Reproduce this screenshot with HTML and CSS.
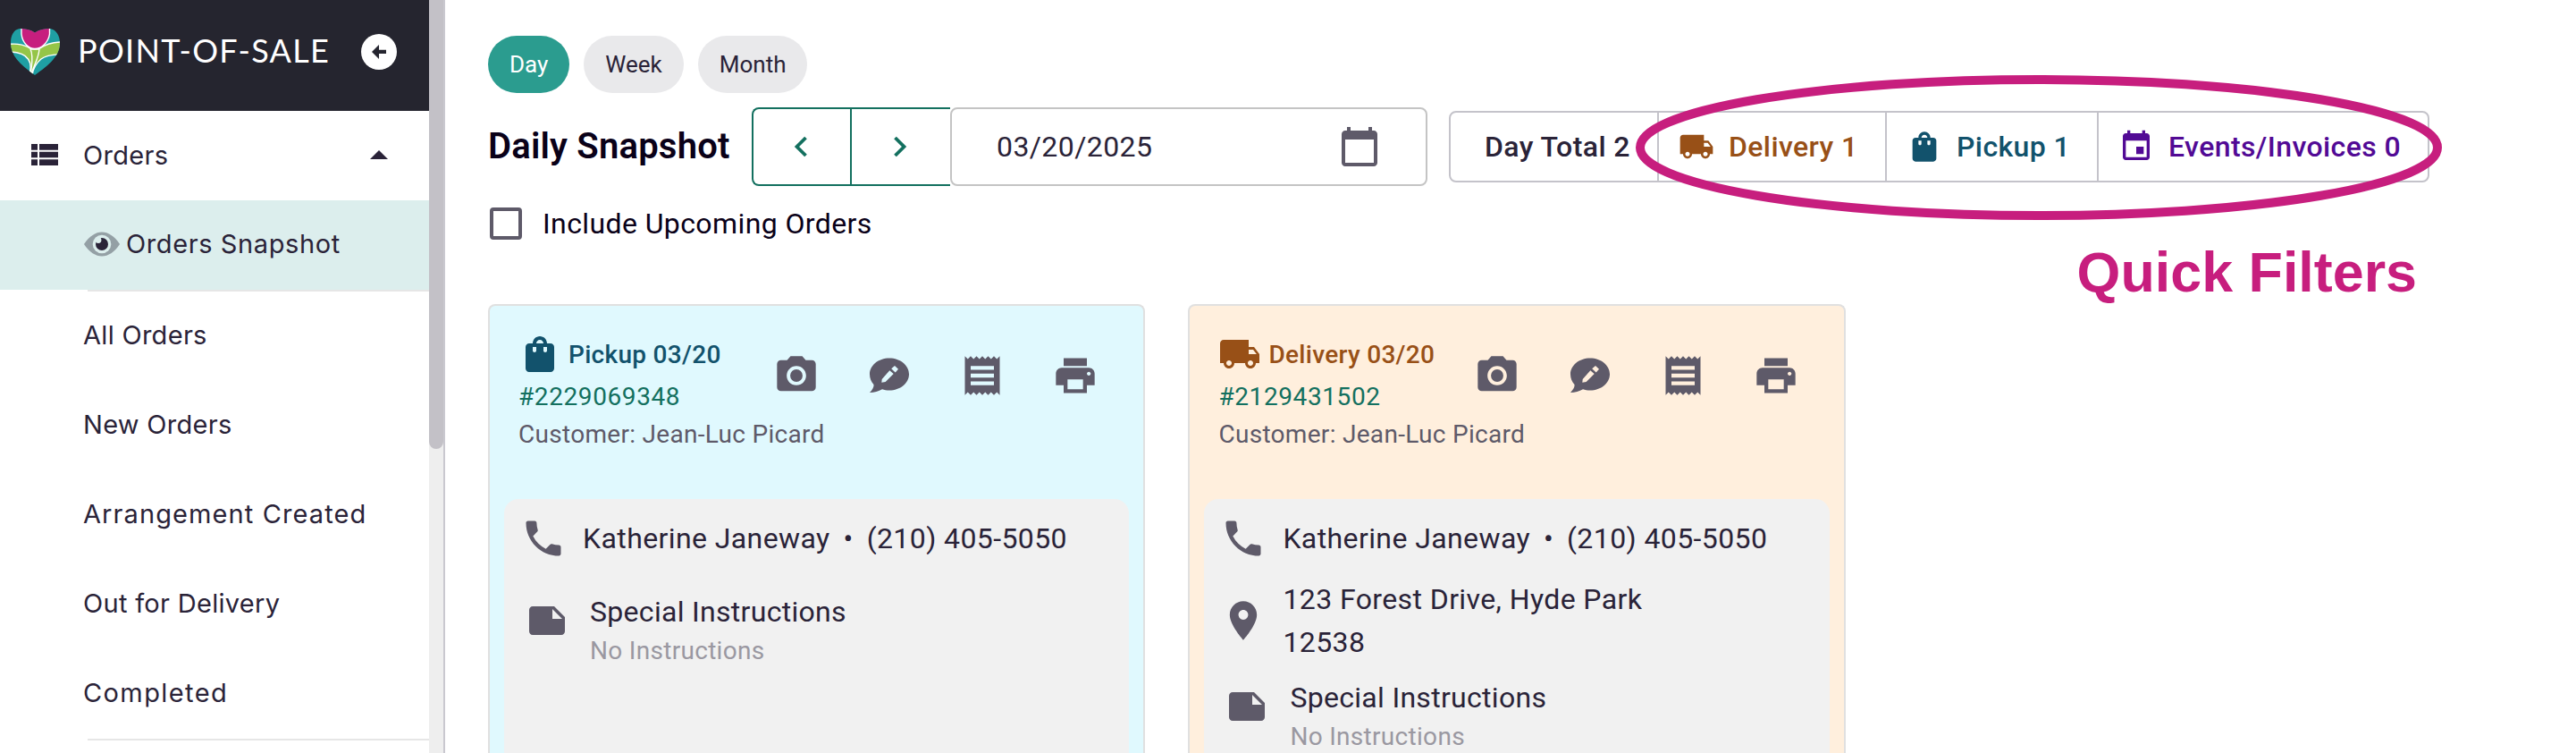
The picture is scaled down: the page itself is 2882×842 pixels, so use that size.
FILE: index.html
```
<!DOCTYPE html>
<html lang="en">
<head>
    <meta charset="UTF-8">
    <meta name="viewport" content="width=device-width, initial-scale=1.0">
    <title>Orders Snapshot</title>
    <link rel="stylesheet" href="styles.css">
</head>
<body>
    <!-- shared icons -->
    <svg class="sprite">
        <symbol id="bag" viewBox="0 0 24 24"><path d="M18 6h-2c0-2.21-1.79-4-4-4S8 3.79 8 6H6c-1.1 0-2 .9-2 2v12c0 1.1.9 2 2 2h12c1.1 0 2-.9 2-2V8c0-1.1-.9-2-2-2zm-8 4c0 .55-.45 1-1 1s-1-.45-1-1V8h2v2zm2-6c1.1 0 2 .9 2 2h-4c0-1.1.9-2 2-2zm4 6c0 .55-.45 1-1 1s-1-.45-1-1V8h2v2z"/></symbol>
        <symbol id="truck" viewBox="0 0 24 24"><path d="M20 8h-3V4H3c-1.1 0-2 .9-2 2v11h2c0 1.66 1.34 3 3 3s3-1.34 3-3h6c0 1.66 1.34 3 3 3s3-1.34 3-3h2v-5l-3-4zM6 18.5c-.83 0-1.5-.67-1.5-1.5s.67-1.5 1.5-1.5 1.5.67 1.5 1.5-.67 1.5-1.5 1.5zm13.5-9l1.96 2.5H17V9.5h2.5zm-1.5 9c-.83 0-1.5-.67-1.5-1.5s.67-1.5 1.5-1.5 1.5.67 1.5 1.5-.67 1.5-1.5 1.5z"/></symbol>
        <symbol id="event" viewBox="0 0 24 24"><path d="M17 12h-5v5h5v-5zM16 1v2H8V1H6v2H5c-1.11 0-1.99.9-1.99 2L3 19c0 1.1.89 2 2 2h14c1.1 0 2-.9 2-2V5c0-1.1-.9-2-2-2h-1V1h-2zm3 18H5V8h14v11z"/></symbol>
        <symbol id="calendar" viewBox="0 0 24 24"><path d="M20 3h-1V1h-2v2H7V1H5v2H4c-1.1 0-2 .9-2 2v16c0 1.1.9 2 2 2h16c1.1 0 2-.9 2-2V5c0-1.1-.9-2-2-2zm0 18H4V8h16v13z"/></symbol>
        <symbol id="camera" viewBox="0 0 24 24"><circle cx="12" cy="12" r="3.2"/><path d="M9 2L7.17 4H4c-1.1 0-2 .9-2 2v12c0 1.1.9 2 2 2h16c1.1 0 2-.9 2-2V6c0-1.1-.9-2-2-2h-3.17L15 2H9zm3 15c-2.76 0-5-2.24-5-5s2.24-5 5-5 5 2.24 5 5-2.24 5-5 5z"/></symbol>
        <symbol id="message" viewBox="0 0 52 52"><path fill-rule="evenodd" d="M26 6.5c12.2 0 22 8 22 18s-9.8 18-22 18c-3 0-5.6-.4-8-1.2C14 43.5 9 45 4 45c3-3 5-6.5 4.5-9C5.7 33 4 29 4 24.5c0-10 9.8-18 22-18zM17.3 33.7l4.4-.7 9-9-4.4-3.7-8.6 9.7zM28.2 18.3l4.5 4.2 3.3-3.7-4-3.900z"/></symbol>
        <symbol id="receipt" viewBox="0 0 24 24"><path d="M18 17H6v-2h12v2zm0-4H6v-2h12v2zm0-4H6V7h12v2zM3 22l1.5-1.5L6 22l1.5-1.5L9 22l1.5-1.5L12 22l1.5-1.5L15 22l1.5-1.5L18 22l1.5-1.5L21 22V2l-1.5 1.5L18 2l-1.5 1.5L15 2l-1.5 1.5L12 2l-1.5 1.5L9 2 7.5 3.5 6 2 4.5 3.5 3 2v20z"/></symbol>
        <symbol id="print" viewBox="0 0 24 24"><path d="M19 8H5c-1.66 0-3 1.34-3 3v6h4v4h12v-4h4v-6c0-1.66-1.34-3-3-3zm-3 11H8v-5h8v5zm3-7c-.55 0-1-.45-1-1s.45-1 1-1 1 .45 1 1-.45 1-1 1zm-1-9H6v4h12V3z"/></symbol>
        <symbol id="phone" viewBox="0 0 24 24"><path d="M6.62 10.79c1.44 2.83 3.76 5.14 6.59 6.59l2.2-2.2c.27-.27.67-.36 1.02-.24 1.12.37 2.33.57 3.57.57.55 0 1 .45 1 1V20c0 .55-.45 1-1 1-9.39 0-17-7.61-17-17 0-.55.45-1 1-1h3.5c.55 0 1 .45 1 1 0 1.25.2 2.45.57 3.57.11.35.03.74-.25 1.02l-2.2 2.2z"/></symbol>
        <symbol id="pin" viewBox="0 0 24 24"><path d="M12 2C8.13 2 5 5.13 5 9c0 5.25 7 13 7 13s7-7.75 7-13c0-3.87-3.13-7-7-7zm0 9.5c-1.38 0-2.5-1.12-2.5-2.5s1.12-2.5 2.5-2.5 2.5 1.12 2.5 2.5-1.12 2.5-2.5 2.5z"/></symbol>
        <symbol id="note" viewBox="0 0 24 24"><path d="M22 10l-6-6H4c-1.1 0-2 .9-2 2v12.01c0 1.1.9 1.99 2 1.99l16-.01c1.1 0 2-.89 2-1.99v-8zm-7-4.5l5.5 5.5H15V5.5z"/></symbol>
    </svg>

    <div class="sidebar">
        <div class="brand">
            <svg class="logo" viewBox="10 30 60 56">
                <clipPath id="heart"><path d="M39 36.5C34 33 28 32 22 32C15 33 12 40 12 48C12 62 22 72 39 84C56 72 67 62 67 48C67 40 63 33 56 32C50 32 44 33 39 36.5z"/></clipPath>
                <g clip-path="url(#heart)">
                    <rect x="10" y="30" width="60" height="56" fill="#1f9fa3"/>
                    <g stroke="#fff" stroke-width="1.4">
                        <path fill="#95c548" d="M10 49.5C20 48 30 51 35 55L43 55C50 50 58 47 69 47L69 60.5C58 61 51 62 46 66C40 71 37 77 36 84L33 82C36 72 34 58 10 58z"/>
                        <path fill="none" d="M34 55C38 63 35 74 34.5 82M44 55C43 66 38 72 35.5 82"/>
                        <path fill="#c71e7e" d="M24 28V38C25 48 32 54.5 39 54.5C46 54.5 54 48 55.5 38V28z"/>
                    </g>
                </g>
            </svg>
            <span class="brand-name">POINT-OF-SALE</span>
            <svg class="collapse" viewBox="0 0 40 40"><circle cx="20" cy="20" r="20" fill="#fff"/><path fill="#25252f" d="M12 20l8-8v5.8h8v4.2h-8V28z"/></svg>
        </div>
        <div class="group">
            <svg class="list-icon" viewBox="0 0 30 24"><path d="M0 0h7v6.7H0zM9 0h21v6.7H9zM0 8.7h7v6.6H0zM9 8.7h21v6.6H9zM0 17.3h7V24H0zM9 17.3h21V24H9z"/></svg>
            <span>Orders</span>
            <svg class="caret" viewBox="0 0 20 10"><path d="M0 10L10 0l10 10z"/></svg>
        </div>
        <ul class="menu">
            <li class="active">
                <svg class="eye" viewBox="0 0 40 28">
                    <path fill="#94a0a5" d="M0 14C6 5 13 .5 20 .5S34 5 40 14C34 23 27 27.5 20 27.5S6 23 0 14z"/>
                    <circle cx="20" cy="14" r="10.3" fill="#dceeed"/>
                    <circle cx="20" cy="14" r="7" fill="#2a2338"/>
                    <circle cx="16" cy="9.5" r="3.4" fill="#dceeed"/>
                </svg>
                <span>Orders Snapshot</span>
            </li>
            <li class="divider"></li>
            <li>All Orders</li>
            <li>New Orders</li>
            <li class="wide">Arrangement Created</li>
            <li>Out for Delivery</li>
            <li class="wider">Completed</li>
            <li class="divider"></li>
        </ul>
    </div>
    <div class="scrollbar"><div class="thumb"></div></div>

    <div class="main">
        <div class="chips">
            <span class="chip selected">Day</span>
            <span class="chip">Week</span>
            <span class="chip">Month</span>
        </div>
        <div class="toolbar">
            <h1>Daily Snapshot</h1>
            <div class="arrows">
                <div class="arrow"><svg viewBox="0 0 16 24"><path d="M13.5 2L3.5 12l10 10"/></svg></div>
                <div class="arrow"><svg viewBox="0 0 16 24"><path d="M2.5 2l10 10-10 10"/></svg></div>
            </div>
            <div class="date">
                <span>03/20/2025</span>
                <svg class="icon"><use href="#calendar"/></svg>
            </div>
            <div class="stats">
                <div class="stat total">Day Total 2</div>
                <div class="stat delivery"><svg class="icon"><use href="#truck"/></svg>Delivery 1</div>
                <div class="stat pickup"><svg class="icon"><use href="#bag"/></svg>Pickup 1</div>
                <div class="stat events"><svg class="icon"><use href="#event"/></svg>Events/Invoices 0</div>
                <svg class="ellipse" viewBox="0 0 902 162"><ellipse cx="451" cy="81" rx="446" ry="76"/></svg>
                <div class="callout">Quick Filters</div>
            </div>
        </div>
        <div class="upcoming"><span class="checkbox"></span>Include Upcoming Orders</div>

        <div class="cards">
            <div class="card card-pickup">
                <div class="card-top">
                    <div>
                        <div class="kind"><svg class="icon"><use href="#bag"/></svg>Pickup 03/20</div>
                        <div class="number">#2229069348</div>
                    </div>
                    <div class="actions">
                        <svg><use href="#camera"/></svg>
                        <svg><use href="#message"/></svg>
                        <svg><use href="#receipt"/></svg>
                        <svg><use href="#print"/></svg>
                    </div>
                </div>
                <div class="customer">Customer: Jean-Luc Picard</div>
                <div class="details">
                    <div class="line"><svg><use href="#phone"/></svg><span>Katherine Janeway</span><span class="dot">•</span><span>(210) 405-5050</span></div>
                    <div class="note">
                        <svg><use href="#note"/></svg>
                        <div>
                            <div class="note-title">Special Instructions</div>
                            <div class="note-text">No Instructions</div>
                        </div>
                    </div>
                </div>
            </div>
            <div class="card card-delivery">
                <div class="card-top">
                    <div>
                        <div class="kind"><svg class="icon"><use href="#truck"/></svg>Delivery 03/20</div>
                        <div class="number">#2129431502</div>
                    </div>
                    <div class="actions">
                        <svg><use href="#camera"/></svg>
                        <svg><use href="#message"/></svg>
                        <svg><use href="#receipt"/></svg>
                        <svg><use href="#print"/></svg>
                    </div>
                </div>
                <div class="customer">Customer: Jean-Luc Picard</div>
                <div class="details">
                    <div class="line"><svg><use href="#phone"/></svg><span>Katherine Janeway</span><span class="dot">•</span><span>(210) 405-5050</span></div>
                    <div class="line address"><svg><use href="#pin"/></svg><span>123 Forest Drive, Hyde Park<br>12538</span></div>
                    <div class="note">
                        <svg><use href="#note"/></svg>
                        <div>
                            <div class="note-title">Special Instructions</div>
                            <div class="note-text">No Instructions</div>
                        </div>
                    </div>
                </div>
            </div>
        </div>
    </div>
</body>
</html>
```
FILE: styles.css
```
* {
    box-sizing: border-box;
}
body {
    margin: 0;
    width: 2882px;
    height: 842px;
    overflow: hidden;
    display: flex;
    background-color: #ffffff;
    color: #2a2338;
    font-family: Roboto, "Liberation Sans", sans-serif;
    font-size: 32px;
    letter-spacing: 0.4px;
}
svg {
    display: block;
    flex-shrink: 0;
    fill: currentColor;
}
.sprite {
    position: absolute;
    width: 0;
    height: 0;
}

/* sidebar */
.sidebar {
    width: 480px;
    flex-shrink: 0;
    font-family: Inter, "Open Sans", sans-serif;
    font-size: 29px;
    letter-spacing: 0.3px;
}
.brand {
    height: 124px;
    padding: 0 36px 8px 10px;
    display: flex;
    align-items: center;
    background-color: #25252f;
    color: #ffffff;
}
.logo {
    width: 60px;
    height: 56px;
}
.brand-name {
    flex: 1;
    padding: 0 0 4px 17px;
    font-family: Lato, sans-serif;
    font-size: 36px;
    letter-spacing: 1.3px;
}
.collapse {
    width: 40px;
    height: 40px;
}
.group {
    height: 100px;
    padding: 0 46px 2px 35px;
    display: flex;
    align-items: center;
}
.group span {
    flex: 1;
}
.list-icon {
    width: 30px;
    height: 24px;
    margin-right: 28px;
}
.caret {
    width: 20px;
    height: 10px;
}
.menu {
    list-style: none;
    margin: 0;
    padding: 0;
}
.menu li {
    height: 100px;
    padding: 0 0 3px 93px;
    display: flex;
    align-items: center;
}
.menu .active {
    padding-left: 94px;
    gap: 7px;
    background-color: #dceeed;
    letter-spacing: 0.6px;
}
.menu .divider {
    height: 2px;
    margin-left: 98px;
    padding: 0;
    background-color: #e6e6e6;
}
.menu .wide {
    letter-spacing: 1.1px;
}
.menu .wider {
    letter-spacing: 1.4px;
}
.eye {
    width: 40px;
    height: 28px;
}
.scrollbar {
    width: 18px;
    flex-shrink: 0;
    background-color: #eeeeee;
    border-right: 2px solid #c9c8cf;
}
.thumb {
    height: 502px;
    background-color: #c3c1c7;
    border-radius: 0 0 8px 8px;
}

/* main */
.main {
    flex: 1;
    padding: 40px 0 0 48px;
}
.chips {
    display: flex;
    gap: 16px;
    margin-bottom: 16px;
}
.chip {
    height: 64px;
    line-height: 64px;
    padding: 0 24px;
    border-radius: 32px;
    background-color: #e9e9eb;
    font-size: 26px;
    letter-spacing: 0;
}
.selected {
    background-color: #2b9c8f;
    color: #ffffff;
}
.toolbar {
    height: 88px;
    display: flex;
    align-items: center;
}
h1 {
    width: 295px;
    margin: 0;
    padding-bottom: 2px;
    color: #0a0118;
    font-size: 40px;
    font-weight: 600;
    letter-spacing: 0.2px;
    white-space: nowrap;
}
.arrows {
    width: 222px;
    height: 88px;
    display: flex;
    border: 2px solid #13705f;
    border-right: none;
    border-radius: 8px 0 0 8px;
}
.arrow {
    width: 110px;
    padding-right: 2px;
    display: flex;
    align-items: center;
    justify-content: center;
}
.arrow:first-child {
    border-right: 2px solid #13705f;
}
.arrow svg {
    width: 16px;
    height: 24px;
    fill: none;
    stroke: #13705f;
    stroke-width: 3.8;
}
.date {
    width: 534px;
    height: 88px;
    padding: 0 50px;
    display: flex;
    align-items: center;
    justify-content: space-between;
    border: 2px solid #c4c4c4;
    border-radius: 8px;
}
.date .icon {
    width: 48px;
    height: 48px;
    color: #5e5a69;
}
.stats {
    position: relative;
    height: 80px;
    margin-left: 24px;
    display: flex;
    border: 2px solid #c4c3ca;
    border-radius: 8px;
    font-weight: 500;
}
.stat {
    padding-left: 22px;
    display: flex;
    align-items: center;
    gap: 16px;
    border-right: 2px solid #c4c3ca;
    white-space: nowrap;
}
.stat .icon {
    width: 40px;
    height: 40px;
}
.total {
    width: 233px;
    padding-left: 38px;
}
.delivery {
    width: 255px;
    color: #985017;
}
.pickup {
    width: 237px;
    color: #12526c;
}
.events {
    width: 368px;
    border-right: none;
    color: #520a95;
}
/* highlight over the filter buttons */
.ellipse {
    position: absolute;
    left: 207px;
    top: -42px;
    width: 902px;
    height: 162px;
    fill: none;
    stroke: #c71e7e;
    stroke-width: 10;
}
.callout {
    position: absolute;
    right: 12px;
    top: 146px;
    color: #c71e7e;
    font: bold 62.8px/64px "Liberation Sans", sans-serif;
    letter-spacing: 0;
    white-space: nowrap;
}
.upcoming {
    height: 84px;
    margin-bottom: 48px;
    padding-left: 2px;
    display: flex;
    align-items: center;
    gap: 23px;
    color: #0a0118;
}
.checkbox {
    width: 36px;
    height: 36px;
    border: 4px solid #5e5a69;
    border-radius: 4px;
}

/* order cards */
.cards {
    display: flex;
    gap: 48px;
}
.card {
    width: 735.4px;
    height: 502px;
    padding: 30px 16px 0;
    border: 2px solid #e0e0e0;
    border-bottom: none;
    border-radius: 8px 8px 0 0;
    font-size: 28px;
}
.card-pickup {
    background-color: #e0f9fe;
}
.card-delivery {
    background-color: #ffefdd;
}
.card-top {
    height: 96px;
    padding: 0 34px 0 16px;
    display: flex;
    align-items: center;
    justify-content: space-between;
}
.kind {
    height: 48px;
    display: flex;
    align-items: center;
    gap: 8px;
    font-weight: 500;
    letter-spacing: 0.3px;
}
.kind .icon {
    width: 48px;
    height: 48px;
}
.card-pickup .kind {
    color: #12526c;
}
.card-delivery .kind {
    color: #985017;
}
.number {
    line-height: 48px;
    color: #13705f;
    letter-spacing: 0.6px;
}
.actions {
    display: flex;
    gap: 52px;
    color: #5e5a69;
}
.actions svg {
    width: 52px;
    height: 52px;
}
.customer {
    padding-left: 16px;
    margin-bottom: 54px;
    line-height: 36px;
    color: #5e5a69;
    letter-spacing: 0.3px;
}
.details {
    height: 284px;
    padding: 18px 18px 0;
    display: flex;
    flex-direction: column;
    border-radius: 16px 16px 0 0;
    background-color: #f1f1f1;
    font-size: 32px;
    overflow: hidden;
}
.line {
    height: 52px;
    margin-bottom: 18px;
    display: flex;
    align-items: center;
}
.line svg {
    width: 52px;
    height: 52px;
    margin-right: 18px;
    color: #5e5a69;
}
.dot {
    width: 41px;
    text-align: center;
}
.address {
    height: 96px;
    margin-bottom: 0;
    line-height: 48px;
}
.note {
    margin-top: 14px;
    padding-left: 6px;
    display: flex;
    gap: 24px;
    letter-spacing: 0.3px;
}
.note svg {
    width: 48px;
    height: 48px;
    margin-top: 10px;
    color: #5e5a69;
}
.note-title {
    line-height: 48px;
}
.note-text {
    font-size: 28px;
    line-height: 40px;
    color: #9a98a1;
}
```
